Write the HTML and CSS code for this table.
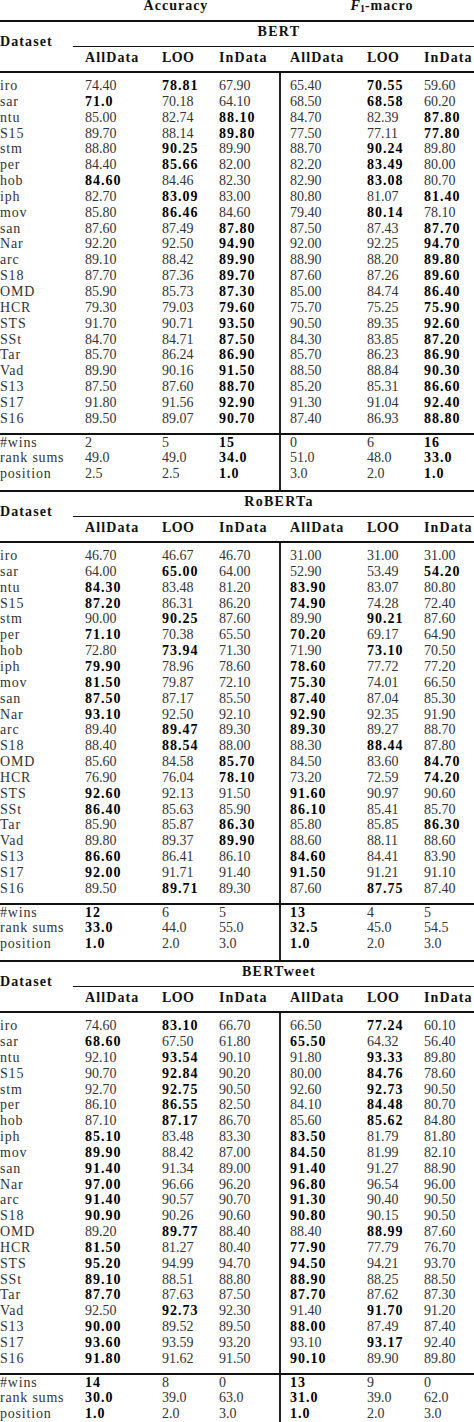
FILE: index.html
```html
<!DOCTYPE html>
<html lang="en">
<head>
<meta charset="utf-8">
<title>Results table</title>
<link rel="stylesheet" href="styles.css">
</head>
<body>
<div class="page">
  <div class="g titles">
    <div class="acc">Accuracy</div>
    <div class="f1"><i>F</i><sub>1</sub>-macro</div>
  </div>

  <section class="blk">
    <div class="g hd">
      <div class="ds">Dataset</div>
      <div class="model">BERT</div>
      <div class="ch c1">AllData</div><div class="ch c2">LOO</div><div class="ch c3">InData</div>
      <div class="ch c4">AllData</div><div class="ch c5">LOO</div><div class="ch c6">InData</div>
    </div>
    <div class="bd">
      <div class="g r"><span>iro</span><span>74.40</span><b>78.81</b><span>67.90</span><span>65.40</span><b>70.55</b><span>59.60</span></div>
      <div class="g r"><span>sar</span><b>71.0</b><span>70.18</span><span>64.10</span><span>68.50</span><b>68.58</b><span>60.20</span></div>
      <div class="g r"><span>ntu</span><span>85.00</span><span>82.74</span><b>88.10</b><span>84.70</span><span>82.39</span><b>87.80</b></div>
      <div class="g r"><span>S15</span><span>89.70</span><span>88.14</span><b>89.80</b><span>77.50</span><span>77.11</span><b>77.80</b></div>
      <div class="g r"><span>stm</span><span>88.80</span><b>90.25</b><span>89.90</span><span>88.70</span><b>90.24</b><span>89.80</span></div>
      <div class="g r"><span>per</span><span>84.40</span><b>85.66</b><span>82.00</span><span>82.20</span><b>83.49</b><span>80.00</span></div>
      <div class="g r"><span>hob</span><b>84.60</b><span>84.46</span><span>82.30</span><span>82.90</span><b>83.08</b><span>80.70</span></div>
      <div class="g r"><span>iph</span><span>82.70</span><b>83.09</b><span>83.00</span><span>80.80</span><span>81.07</span><b>81.40</b></div>
      <div class="g r"><span>mov</span><span>85.80</span><b>86.46</b><span>84.60</span><span>79.40</span><b>80.14</b><span>78.10</span></div>
      <div class="g r"><span>san</span><span>87.60</span><span>87.49</span><b>87.80</b><span>87.50</span><span>87.43</span><b>87.70</b></div>
      <div class="g r"><span>Nar</span><span>92.20</span><span>92.50</span><b>94.90</b><span>92.00</span><span>92.25</span><b>94.70</b></div>
      <div class="g r"><span>arc</span><span>89.10</span><span>88.42</span><b>89.90</b><span>88.90</span><span>88.20</span><b>89.80</b></div>
      <div class="g r"><span>S18</span><span>87.70</span><span>87.36</span><b>89.70</b><span>87.60</span><span>87.26</span><b>89.60</b></div>
      <div class="g r"><span>OMD</span><span>85.90</span><span>85.73</span><b>87.30</b><span>85.00</span><span>84.74</span><b>86.40</b></div>
      <div class="g r"><span>HCR</span><span>79.30</span><span>79.03</span><b>79.60</b><span>75.70</span><span>75.25</span><b>75.90</b></div>
      <div class="g r"><span>STS</span><span>91.70</span><span>90.71</span><b>93.50</b><span>90.50</span><span>89.35</span><b>92.60</b></div>
      <div class="g r"><span>SSt</span><span>84.70</span><span>84.71</span><b>87.50</b><span>84.30</span><span>83.85</span><b>87.20</b></div>
      <div class="g r"><span>Tar</span><span>85.70</span><span>86.24</span><b>86.90</b><span>85.70</span><span>86.23</span><b>86.90</b></div>
      <div class="g r"><span>Vad</span><span>89.90</span><span>90.16</span><b>91.50</b><span>88.50</span><span>88.84</span><b>90.30</b></div>
      <div class="g r"><span>S13</span><span>87.50</span><span>87.60</span><b>88.70</b><span>85.20</span><span>85.31</span><b>86.60</b></div>
      <div class="g r"><span>S17</span><span>91.80</span><span>91.56</span><b>92.90</b><span>91.30</span><span>91.04</span><b>92.40</b></div>
      <div class="g r"><span>S16</span><span>89.50</span><span>89.07</span><b>90.70</b><span>87.40</span><span>86.93</span><b>88.80</b></div>
    </div>
    <div class="sm">
      <div class="g r"><span>#wins</span><span>2</span><span>5</span><b>15</b><span>0</span><span>6</span><b>16</b></div>
      <div class="g r"><span>rank sums</span><span>49.0</span><span>49.0</span><b>34.0</b><span>51.0</span><span>48.0</span><b>33.0</b></div>
      <div class="g r"><span>position</span><span>2.5</span><span>2.5</span><b>1.0</b><span>3.0</span><span>2.0</span><b>1.0</b></div>
    </div>
  </section>

  <section class="blk">
    <div class="g hd">
      <div class="ds">Dataset</div>
      <div class="model">RoBERTa</div>
      <div class="ch c1">AllData</div><div class="ch c2">LOO</div><div class="ch c3">InData</div>
      <div class="ch c4">AllData</div><div class="ch c5">LOO</div><div class="ch c6">InData</div>
    </div>
    <div class="bd">
      <div class="g r"><span>iro</span><span>46.70</span><span>46.67</span><span>46.70</span><span>31.00</span><span>31.00</span><span>31.00</span></div>
      <div class="g r"><span>sar</span><span>64.00</span><b>65.00</b><span>64.00</span><span>52.90</span><span>53.49</span><b>54.20</b></div>
      <div class="g r"><span>ntu</span><b>84.30</b><span>83.48</span><span>81.20</span><b>83.90</b><span>83.07</span><span>80.80</span></div>
      <div class="g r"><span>S15</span><b>87.20</b><span>86.31</span><span>86.20</span><b>74.90</b><span>74.28</span><span>72.40</span></div>
      <div class="g r"><span>stm</span><span>90.00</span><b>90.25</b><span>87.60</span><span>89.90</span><b>90.21</b><span>87.60</span></div>
      <div class="g r"><span>per</span><b>71.10</b><span>70.38</span><span>65.50</span><b>70.20</b><span>69.17</span><span>64.90</span></div>
      <div class="g r"><span>hob</span><span>72.80</span><b>73.94</b><span>71.30</span><span>71.90</span><b>73.10</b><span>70.50</span></div>
      <div class="g r"><span>iph</span><b>79.90</b><span>78.96</span><span>78.60</span><b>78.60</b><span>77.72</span><span>77.20</span></div>
      <div class="g r"><span>mov</span><b>81.50</b><span>79.87</span><span>72.10</span><b>75.30</b><span>74.01</span><span>66.50</span></div>
      <div class="g r"><span>san</span><b>87.50</b><span>87.17</span><span>85.50</span><b>87.40</b><span>87.04</span><span>85.30</span></div>
      <div class="g r"><span>Nar</span><b>93.10</b><span>92.50</span><span>92.10</span><b>92.90</b><span>92.35</span><span>91.90</span></div>
      <div class="g r"><span>arc</span><span>89.40</span><b>89.47</b><span>89.30</span><b>89.30</b><span>89.27</span><span>88.70</span></div>
      <div class="g r"><span>S18</span><span>88.40</span><b>88.54</b><span>88.00</span><span>88.30</span><b>88.44</b><span>87.80</span></div>
      <div class="g r"><span>OMD</span><span>85.60</span><span>84.58</span><b>85.70</b><span>84.50</span><span>83.60</span><b>84.70</b></div>
      <div class="g r"><span>HCR</span><span>76.90</span><span>76.04</span><b>78.10</b><span>73.20</span><span>72.59</span><b>74.20</b></div>
      <div class="g r"><span>STS</span><b>92.60</b><span>92.13</span><span>91.50</span><b>91.60</b><span>90.97</span><span>90.60</span></div>
      <div class="g r"><span>SSt</span><b>86.40</b><span>85.63</span><span>85.90</span><b>86.10</b><span>85.41</span><span>85.70</span></div>
      <div class="g r"><span>Tar</span><span>85.90</span><span>85.87</span><b>86.30</b><span>85.80</span><span>85.85</span><b>86.30</b></div>
      <div class="g r"><span>Vad</span><span>89.80</span><span>89.37</span><b>89.90</b><span>88.60</span><span>88.11</span><span>88.60</span></div>
      <div class="g r"><span>S13</span><b>86.60</b><span>86.41</span><span>86.10</span><b>84.60</b><span>84.41</span><span>83.90</span></div>
      <div class="g r"><span>S17</span><b>92.00</b><span>91.71</span><span>91.40</span><b>91.50</b><span>91.21</span><span>91.10</span></div>
      <div class="g r"><span>S16</span><span>89.50</span><b>89.71</b><span>89.30</span><span>87.60</span><b>87.75</b><span>87.40</span></div>
    </div>
    <div class="sm">
      <div class="g r"><span>#wins</span><b>12</b><span>6</span><span>5</span><b>13</b><span>4</span><span>5</span></div>
      <div class="g r"><span>rank sums</span><b>33.0</b><span>44.0</span><span>55.0</span><b>32.5</b><span>45.0</span><span>54.5</span></div>
      <div class="g r"><span>position</span><b>1.0</b><span>2.0</span><span>3.0</span><b>1.0</b><span>2.0</span><span>3.0</span></div>
    </div>
  </section>

  <section class="blk last">
    <div class="g hd">
      <div class="ds">Dataset</div>
      <div class="model">BERTweet</div>
      <div class="ch c1">AllData</div><div class="ch c2">LOO</div><div class="ch c3">InData</div>
      <div class="ch c4">AllData</div><div class="ch c5">LOO</div><div class="ch c6">InData</div>
    </div>
    <div class="bd">
      <div class="g r"><span>iro</span><span>74.60</span><b>83.10</b><span>66.70</span><span>66.50</span><b>77.24</b><span>60.10</span></div>
      <div class="g r"><span>sar</span><b>68.60</b><span>67.50</span><span>61.80</span><b>65.50</b><span>64.32</span><span>56.40</span></div>
      <div class="g r"><span>ntu</span><span>92.10</span><b>93.54</b><span>90.10</span><span>91.80</span><b>93.33</b><span>89.80</span></div>
      <div class="g r"><span>S15</span><span>90.70</span><b>92.84</b><span>90.20</span><span>80.00</span><b>84.76</b><span>78.60</span></div>
      <div class="g r"><span>stm</span><span>92.70</span><b>92.75</b><span>90.50</span><span>92.60</span><b>92.73</b><span>90.50</span></div>
      <div class="g r"><span>per</span><span>86.10</span><b>86.55</b><span>82.50</span><span>84.10</span><b>84.48</b><span>80.70</span></div>
      <div class="g r"><span>hob</span><span>87.10</span><b>87.17</b><span>86.70</span><span>85.60</span><b>85.62</b><span>84.80</span></div>
      <div class="g r"><span>iph</span><b>85.10</b><span>83.48</span><span>83.30</span><b>83.50</b><span>81.79</span><span>81.80</span></div>
      <div class="g r"><span>mov</span><b>89.90</b><span>88.42</span><span>87.00</span><b>84.50</b><span>81.99</span><span>82.10</span></div>
      <div class="g r"><span>san</span><b>91.40</b><span>91.34</span><span>89.00</span><b>91.40</b><span>91.27</span><span>88.90</span></div>
      <div class="g r"><span>Nar</span><b>97.00</b><span>96.66</span><span>96.20</span><b>96.80</b><span>96.54</span><span>96.00</span></div>
      <div class="g r"><span>arc</span><b>91.40</b><span>90.57</span><span>90.70</span><b>91.30</b><span>90.40</span><span>90.50</span></div>
      <div class="g r"><span>S18</span><b>90.90</b><span>90.26</span><span>90.60</span><b>90.80</b><span>90.15</span><span>90.50</span></div>
      <div class="g r"><span>OMD</span><span>89.20</span><b>89.77</b><span>88.40</span><span>88.40</span><b>88.99</b><span>87.60</span></div>
      <div class="g r"><span>HCR</span><b>81.50</b><span>81.27</span><span>80.40</span><b>77.90</b><span>77.79</span><span>76.70</span></div>
      <div class="g r"><span>STS</span><b>95.20</b><span>94.99</span><span>94.70</span><b>94.50</b><span>94.21</span><span>93.70</span></div>
      <div class="g r"><span>SSt</span><b>89.10</b><span>88.51</span><span>88.80</span><b>88.90</b><span>88.25</span><span>88.50</span></div>
      <div class="g r"><span>Tar</span><b>87.70</b><span>87.63</span><span>87.50</span><b>87.70</b><span>87.62</span><span>87.30</span></div>
      <div class="g r"><span>Vad</span><span>92.50</span><b>92.73</b><span>92.30</span><span>91.40</span><b>91.70</b><span>91.20</span></div>
      <div class="g r"><span>S13</span><b>90.00</b><span>89.52</span><span>89.50</span><b>88.00</b><span>87.49</span><span>87.40</span></div>
      <div class="g r"><span>S17</span><b>93.60</b><span>93.59</span><span>93.20</span><span>93.10</span><b>93.17</b><span>92.40</span></div>
      <div class="g r"><span>S16</span><b>91.80</b><span>91.62</span><span>91.50</span><b>90.10</b><span>89.90</span><span>89.80</span></div>
    </div>
    <div class="sm">
      <div class="g r"><span>#wins</span><b>14</b><span>8</span><span>0</span><b>13</b><span>9</span><span>0</span></div>
      <div class="g r"><span>rank sums</span><b>30.0</b><span>39.0</span><span>63.0</span><b>31.0</b><span>39.0</span><span>62.0</span></div>
      <div class="g r"><span>position</span><b>1.0</b><span>2.0</span><span>3.0</span><b>1.0</b><span>2.0</span><span>3.0</span></div>
    </div>
  </section>
</div>
</body>
</html>
```

FILE: styles.css
```css
html, body {
  margin: 0;
  padding: 0;
  overflow: hidden;
  background: #fff;
}

body {
  font-family: "Liberation Serif", "Times New Roman", serif;
  font-size: 14px;
  color: #333;
}

.page {
  width: 485px;
}

.g {
  display: grid;
  grid-template-columns: 73px 77px 57px 72px 76px 57px 73px;
}

/* title line */
.titles {
  height: 20px;
  line-height: 12px;
  font-weight: 700;
  color: #111;
  letter-spacing: 1px;
}
.titles .acc { grid-column: 2 / 5; text-align: center; }
.titles .f1 { grid-column: 5 / 8; text-align: center; }
.titles i { font-weight: 700; letter-spacing: 0; }
.titles sub {
  font-size: 10px;
  line-height: 0;
  vertical-align: -2px;
  letter-spacing: 0;
}

/* blocks */
.blk { border-top: 2px solid #111; }
.blk.last { border-bottom: 2px solid #111; }

/* header */
.hd {
  border-bottom: 2px solid #111;
  font-weight: 700;
  color: #111;
}
.hd .ds {
  grid-column: 1;
  grid-row: 1 / 3;
  padding-top: 12px;
  line-height: 16px;
  letter-spacing: 1.1px;
}
.hd .model {
  grid-column: 2 / 8;
  grid-row: 1;
  text-align: center;
  line-height: 16px;
  padding: 2px 0 6px;
  border-bottom: 1px solid #111;
  letter-spacing: 1.3px;
}
.hd .ch {
  grid-row: 2;
  line-height: 16px;
  padding: 3px 0 5px 12px;
  letter-spacing: 1.1px;
  white-space: nowrap;
}
.hd .c1 { grid-column: 2; }
.hd .c2 { grid-column: 3; letter-spacing: 0.4px; }
.hd .c3 { grid-column: 4; }
.hd .c4 { grid-column: 5; padding-left: 11px; }
.hd .c5 { grid-column: 6; letter-spacing: 0.4px; }
.hd .c6 { grid-column: 7; }

/* rows */
.r > * {
  padding-left: 12px;
  white-space: nowrap;
}
.r > :first-child {
  padding-left: 0;
  letter-spacing: 0.8px;
}
.r > :nth-child(5) {
  padding-left: 9px;
  border-left: 2px solid #222;
}
.r b {
  font-weight: 700;
  color: #000;
  letter-spacing: 1px;
}

.bd .r { line-height: 15.85px; }
.bd .r:first-child > * { padding-top: 5px; }
.bd .r:last-child > * { padding-bottom: 6px; }

.sm { border-top: 2px solid #111; }
.sm .r { line-height: 15.5px; }
.sm .r:last-child > * { padding-bottom: 9px; }
```
